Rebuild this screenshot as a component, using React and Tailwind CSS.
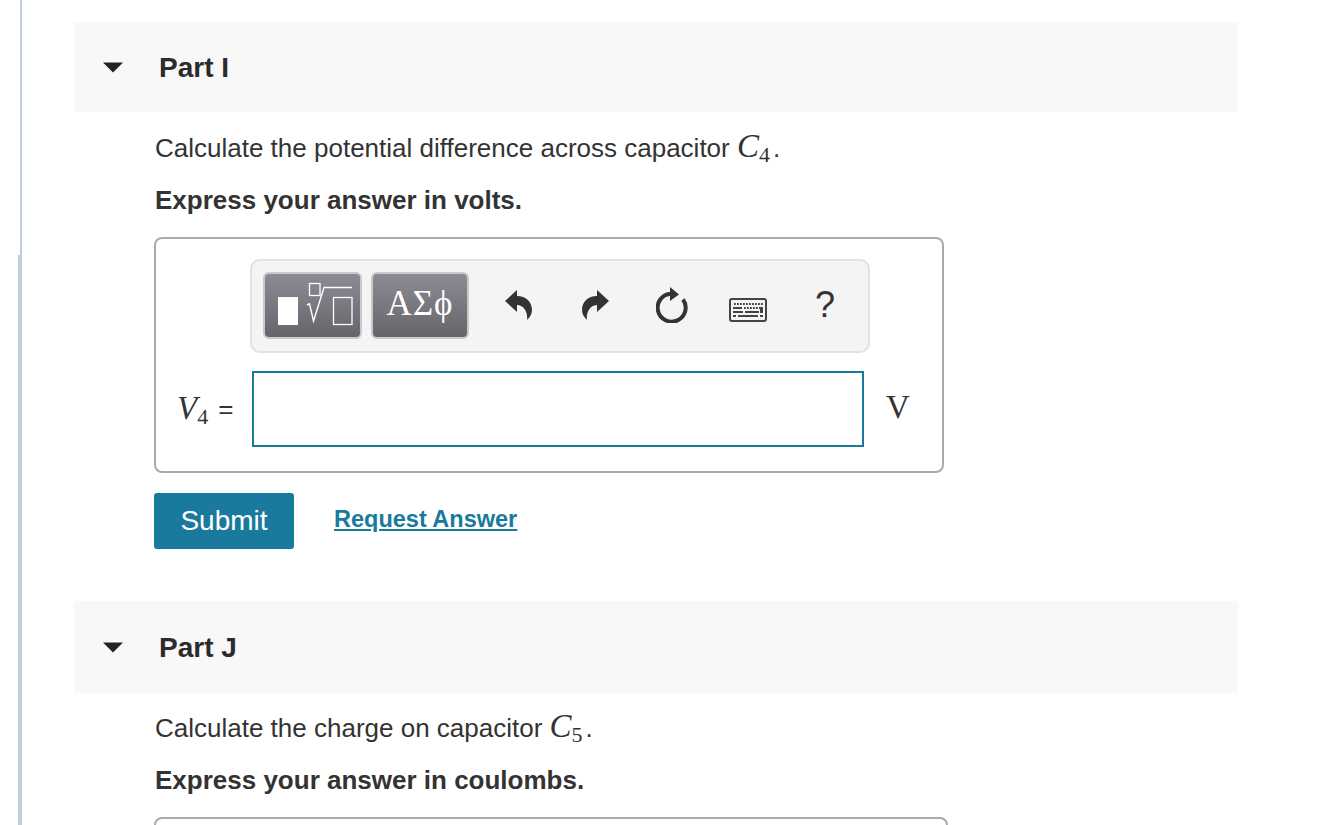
const sans = "font-['Liberation_Sans',Arial,sans-serif]";
const serif = "font-['Liberation_Serif','DejaVu_Serif',serif]";

function Caret() {
  return (
    <svg width="22" height="12" viewBox="0 0 22 12" className="shrink-0">
      <path d="M1 1.5h20L11 11.5z" fill="#222" />
    </svg>
  );
}

function PartHeader({ title, h }) {
  return (
    <div className={`flex items-center bg-[#f8f8f8] pl-[28px] ${h}`}>
      <Caret />
      <h2 className="ml-[35px] mt-[2px] text-[28px] font-bold leading-none text-[#2b2b2b]">{title}</h2>
    </div>
  );
}

function MathVar({ letter, sub }) {
  return (
    <span className={`${serif} text-[#333]`}>
      <i className="text-[33px] leading-none">{letter}</i>
      <span className="relative top-[5px] text-[22px] leading-none">{sub}</span>
    </span>
  );
}

function TemplatesIcon() {
  return (
    <svg width="95" height="63" viewBox="0 0 95 63" className="block">
      <rect x="13" y="23" width="20" height="28" fill="#fff" />
      <rect x="44.5" y="9.5" width="10.5" height="12" fill="none" stroke="#fff" strokeWidth="1.3" />
      <path d="M42 31l2.5-1.2L48.5 47 59 13.5h28" fill="none" stroke="#fff" strokeWidth="1.4" />
      <rect x="68.5" y="23.5" width="18.5" height="27" fill="none" stroke="#fff" strokeWidth="1.3" />
    </svg>
  );
}

function UndoIcon({ flip }) {
  return (
    <svg width="27" height="30" viewBox="0 0 27 30" className={flip ? "block -scale-x-100" : "block"}>
      <path d="M0 11L12 0V6C21 6 27 12 27 20C27 24 25 27 22 30C23 24 20 15 12 15V22Z" fill="#333" />
    </svg>
  );
}

function ResetIcon() {
  return (
    <svg width="32" height="36" viewBox="0 0 32 36" className="block">
      <path d="M15 6.7A14 14 0 1 0 27 12.5" fill="none" stroke="#333" strokeWidth="4" />
      <path d="M14 0l9 7.5L14 14z" fill="#333" />
    </svg>
  );
}

function KeyboardIcon() {
  const top = [6, 9, 12, 15, 18, 21, 24, 27, 30, 33];
  return (
    <svg width="38" height="24" viewBox="0 0 38 24" className="block">
      <rect x="1" y="1" width="36" height="22" rx="2" fill="none" stroke="#444" strokeWidth="2" />
      {top.map((x) => <rect key={x} x={x - 1} y="5" width="1.8" height="2" fill="#444" />)}
      {top.slice(3, 9).map((x) => <rect key={x} x={x} y="9" width="1.8" height="2" fill="#444" />)}
      <rect x="4" y="9" width="9" height="2" fill="#444" />
      <rect x="4" y="13" width="10" height="2" fill="#444" />
      <rect x="16" y="13" width="14" height="2" fill="#444" />
      <rect x="31" y="9" width="3" height="6" fill="#444" />
      <rect x="4" y="17" width="3" height="2" fill="#444" />
      <rect x="9" y="17" width="20" height="2" fill="#444" />
      <rect x="31" y="17" width="3" height="2" fill="#444" />
    </svg>
  );
}

function ToolbarButton({ w, children }) {
  return (
    <div className={`flex h-[67px] items-center justify-center rounded-[6px] border-2 border-[#c9c9c9] bg-gradient-to-b from-[#8d8c96] to-[#66656a] ${w}`}>
      {children}
    </div>
  );
}

function Section({ title, headH, mt, letter, sub, text, unit }) {
  return (
    <>
      <PartHeader title={title} h={headH} />
      <div className="pl-[81px]">
        <p className={`text-[26px] leading-[38px] text-[#333] ${mt}`}>
          {text} <MathVar letter={letter} sub={sub} />
          <span className="ml-[3px]">.</span>
        </p>
        <p className="mt-[13px] text-[26px] font-bold leading-[38px] text-[#333]">Express your answer in {unit}.</p>
      </div>
    </>
  );
}

export default function App() {
  return (
    <div className={`flex h-[825px] w-[1322px] overflow-hidden bg-white ${sans}`}>
      <div className="flex w-[22px] shrink-0 flex-col items-end">
        <div className="h-[255px] w-[2px] bg-[#bfcfe2]" />
        <div className="w-[4px] flex-1 bg-[#bfcfe2]" />
      </div>
      <main className="ml-[52px] w-[1164px] pt-[22px]">
        <Section title="Part I" headH="h-[90px]" mt="mt-[17px]" letter="C" sub="4" text="Calculate the potential difference across capacitor" unit="volts" />
        <div className="ml-[80px] mt-[18px] h-[236px] w-[790px] rounded-[8px] border-2 border-[#aaa] pl-[94px] pt-[20px]">
          <div className="flex h-[94px] w-[620px] items-center rounded-[10px] border-2 border-[#e2e2e2] bg-[#f4f4f4] pb-[2px] pl-[11px]">
            <ToolbarButton w="w-[99px]"><TemplatesIcon /></ToolbarButton>
            <ToolbarButton w="ml-[9px] w-[98px]">
              <span className={`${serif} mb-[4px] text-[35px] leading-none tracking-[1px] text-white`}>ΑΣϕ</span>
            </ToolbarButton>
            <div className="ml-[36px]"><UndoIcon /></div>
            <div className="ml-[50px]"><UndoIcon flip /></div>
            <div className="ml-[47px]"><ResetIcon /></div>
            <div className="ml-[41px] mt-[10px]"><KeyboardIcon /></div>
            <span className="ml-[48px] text-[36px] leading-none text-[#333]">?</span>
          </div>
          <div className="relative ml-[2px] mt-[18px] h-[76px] w-[612px] border-2 border-[#1a7a9e] bg-white">
            <div className="absolute left-[-77px] top-[19px] flex items-center whitespace-nowrap">
              <MathVar letter="V" sub="4" />
              <span className="ml-[10px] text-[26px] leading-none text-[#333]">=</span>
            </div>
            <span className={`${serif} absolute left-[632px] top-[18px] text-[33px] leading-none text-[#333]`}>V</span>
          </div>
        </div>
        <div className="ml-[80px] mt-[20px] flex items-center">
          <button className="h-[56px] w-[140px] rounded-[3px] bg-[#1a7a9e] text-[28px] text-white">Submit</button>
          <a className="mb-[2px] ml-[40px] text-[23.5px] font-bold text-[#1a7a9e] underline">Request Answer</a>
        </div>
        <div className="mt-[52px]">
          <Section title="Part J" headH="h-[92px]" mt="mt-[16px]" letter="C" sub="5" text="Calculate the charge on capacitor" unit="coulombs" />
        </div>
        <div className="ml-[80px] mt-[18px] h-[200px] w-[794px] rounded-[8px] border-2 border-[#aaa]" />
      </main>
    </div>
  );
}
